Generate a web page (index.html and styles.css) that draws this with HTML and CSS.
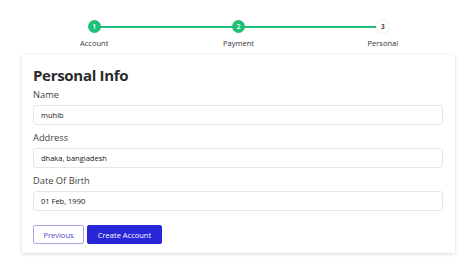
FILE: index.html
```html
<!DOCTYPE html>
<html>
<head>
<meta charset="utf-8">
<link rel="stylesheet" href="styles.css">
</head>
<body>
<div class="page">
  <div class="stepper">
    <div class="step done">
      <div class="dot">1</div>
      <div class="step-label">Account</div>
    </div>
    <div class="step done">
      <div class="dot">2</div>
      <div class="step-label">Payment</div>
    </div>
    <div class="step">
      <div class="dot">3</div>
      <div class="step-label">Personal</div>
    </div>
  </div>
  <div class="card">
    <h1 class="title">Personal Info</h1>
    <div class="field">
      <label class="label">Name</label>
      <div class="input">muhib</div>
    </div>
    <div class="field">
      <label class="label">Address</label>
      <div class="input">dhaka, bangladesh</div>
    </div>
    <div class="field">
      <label class="label">Date Of Birth</label>
      <div class="input">01 Feb, 1990</div>
    </div>
    <div class="actions">
      <button class="btn btn-outline">Previous</button>
      <button class="btn btn-primary">Create Account</button>
    </div>
  </div>
</div>
</body>
</html>
```
FILE: styles.css
```css
* { box-sizing: border-box; }
html, body { margin: 0; padding: 0; background: #fff; }
body {
  font-family: "Open Sans", "Inter", sans-serif;
  color: #2b2b2b;
  width: 474px;
  height: 277px;
  overflow: hidden;
}
.page {
  padding: 21px 19px 0 22px;
}
.stepper {
  display: grid;
  grid-template-columns: repeat(3, 1fr);
  height: 34px;
}
.step {
  position: relative;
  display: flex;
  flex-direction: column;
  align-items: center;
}
.step.done::after {
  content: "";
  position: absolute;
  top: 5px;
  left: 50%;
  width: 100%;
  height: 2px;
  background: #21c07a;
  z-index: 0;
}
.dot {
  position: relative;
  z-index: 1;
  width: 13px;
  height: 13px;
  border-radius: 50%;
  background: #fff;
  color: #333;
  font-size: 7px;
  font-weight: 600;
  line-height: 13px;
  text-align: center;
  box-shadow: 0 0 2px rgba(0,0,0,0.18);
  margin-top: -1px;
}
.step.done .dot {
  background: #21c07a;
  color: #fff;
  box-shadow: none;
}
.step-label {
  margin-top: 5px;
  font-size: 7.5px;
  line-height: 10px;
  color: #333;
}
.card {
  width: 433px;
  height: 198px;
  background: #fff;
  box-shadow: 0 1px 4px rgba(0,0,0,0.16);
  padding: 8px 12px 9px 11px;
  display: flex;
  flex-direction: column;
}
.title {
  margin: 0 0 1px;
  font-size: 15px;
  letter-spacing: -0.3px;
  line-height: 24px;
  font-weight: 700;
  color: #2a2a2a;
}
.field {
  display: flex;
  flex-direction: column;
  margin-bottom: 6px;
}
.label {
  font-size: 9.3px;
  line-height: 14px;
  color: #444;
  margin-bottom: 3px;
}
.input {
  height: 20px;
  border: 1px solid #e6e6e6;
  border-radius: 3px;
  padding: 0 7px;
  font-size: 7.5px;
  font-weight: 500;
  line-height: 18px;
  color: #151515;
}
.actions {
  display: flex;
  gap: 3px;
  margin-top: 8px;
}
.btn {
  height: 19px;
  font-family: inherit;
  font-size: 7.5px;
  font-weight: 500;
  border-radius: 2px;
  padding: 0;
  cursor: pointer;
}
.btn-outline {
  width: 51px;
  background: #fff;
  border: 1px solid #a9a6e4;
  color: #4a46c4;
}
.btn-primary {
  width: 75px;
  background: #2727d8;
  border: 1px solid #2727d8;
  color: #fff;
}
```
